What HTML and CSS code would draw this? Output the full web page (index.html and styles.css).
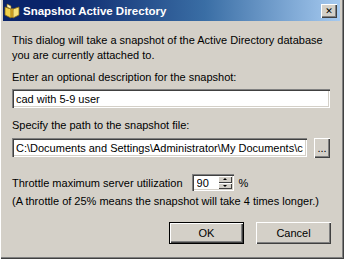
FILE: index.html
```html
<!DOCTYPE html>
<html lang="en">
<head>
  <meta charset="UTF-8" />
  <title>Snapshot Active Directory</title>
  <link rel="stylesheet" href="styles.css">
</head>
<body>
  <div class="window">
    <div class="titlebar">
      <svg class="app-icon" width="16" height="16" viewBox="0 0 16 16">
        <path d="M1 4 L7 6 L7 15 L1 12 Z" fill="#f2d24a" stroke="#8a6a10" stroke-width="0.8"/>
        <path d="M15 4 L9 6 L9 15 L15 12 Z" fill="#f7e27a" stroke="#8a6a10" stroke-width="0.8"/>
        <path d="M7 6 L8 5 L9 6 L9 15 L8 14 L7 15 Z" fill="#c89a20"/>
        <path d="M3 1 L7 3 L7 6 L3 4 Z" fill="#fff6c0" stroke="#8a6a10" stroke-width="0.6"/>
      </svg>
      <span class="title">Snapshot Active Directory</span>
      <button class="close">&#x2715;</button>
    </div>

    <div class="content">
      <p class="intro">This dialog will take a snapshot of the Active Directory database<br>you are currently attached to.</p>

      <label class="field-label" for="desc">Enter an optional description for the snapshot:</label>
      <input class="textbox" id="desc" type="text" value="cad with 5-9 user">

      <label class="field-label spaced" for="path">Specify the path to the snapshot file:</label>
      <div class="path-row">
        <input class="textbox path" id="path" type="text" value="C:\Documents and Settings\Administrator\My Documents\cad with 5-9 user.snp">
        <button class="btn browse">...</button>
      </div>

      <div class="throttle-row">
        <span>Throttle maximum server utilization</span>
        <div class="spin">
          <input class="spin-value" type="text" value="90">
          <div class="spin-arrows">
            <button class="arrow up"></button>
            <button class="arrow down"></button>
          </div>
        </div>
        <span>%</span>
      </div>
      <p class="note">(A throttle of 25% means the snapshot will take 4 times longer.)</p>

      <div class="actions">
        <button class="btn default">OK</button>
        <button class="btn">Cancel</button>
      </div>
    </div>
  </div>
</body>
</html>
```

FILE: styles.css
```css
:root {
  --face: #d4d0c8;
  --shadow: #808080;
  --dark: #404040;
  --text: #000;
}
body {
  margin: 0;
  background-color: var(--face);
  font-family: 'Liberation Sans', Arial, sans-serif;
  font-size: 11px;
  color: var(--text);
}
.window {
  width: 344px;
  height: 259px;
  box-sizing: border-box;
  padding: 0 4px 4px 3px;
  background-color: var(--face);
  box-shadow: inset 2px 0 0 -1px #fff, inset -1px -1px 0 var(--dark), inset -2px -2px 0 var(--shadow);
}
.titlebar {
  height: 21px;
  display: flex;
  align-items: center;
  padding: 0 2px 0 1px;
  background: linear-gradient(to right, #0a246a 0%, #0a246a 15%, #3a6ea5 60%, #a6caf0 100%);
}
.app-icon {
  flex: none;
  margin-right: 3px;
}
.title {
  flex: 1;
  color: #fff;
  font-weight: bold;
  font-size: 11.5px;
}
.close {
  width: 16px;
  height: 14px;
  padding: 0;
  margin-right: 1px;
  font-size: 9px;
  font-weight: bold;
  line-height: 12px;
  font-family: 'DejaVu Sans', sans-serif;
  color: #000;
  background-color: var(--face);
  border: none;
  box-shadow: inset 1px 1px 0 #fff, inset -1px -1px 0 var(--dark), inset -2px -2px 0 var(--shadow);
}
.content {
  padding: 12px 9px 0 9px;
}
p {
  margin: 0;
  line-height: 15px;
}
.field-label {
  display: block;
  line-height: 15px;
  margin-top: 7px;
  margin-bottom: 4px;
}
.field-label.spaced {
  margin-top: 10px;
  margin-bottom: 5px;
}
.textbox {
  display: block;
  box-sizing: border-box;
  width: 318px;
  height: 19px;
  margin: 0;
  padding: 0 4px;
  font: inherit;
  color: var(--text);
  background-color: #fff;
  border: none;
  box-shadow: inset 1px 1px 0 var(--shadow), inset 2px 2px 0 var(--dark), inset -1px -1px 0 #fff, inset -2px -2px 0 var(--face);
  outline: none;
}
.path-row {
  display: flex;
  align-items: flex-start;
  gap: 7px;
}
.textbox.path {
  width: 295px;
}
.btn {
  box-sizing: border-box;
  padding: 0;
  font: inherit;
  color: var(--text);
  background-color: var(--face);
  border: none;
  box-shadow: inset 1px 1px 0 #fff, inset -1px -1px 0 var(--dark), inset -2px -2px 0 var(--shadow);
}
.browse {
  width: 16px;
  height: 20px;
  line-height: 14px;
}
.throttle-row {
  display: flex;
  align-items: center;
  margin-top: 16px;
  height: 17px;
}
.spin {
  display: flex;
  width: 42px;
  height: 17px;
  margin: 0 5px 0 9px;
  box-sizing: border-box;
  background-color: #fff;
  box-shadow: inset 1px 1px 0 var(--shadow), inset 2px 2px 0 var(--dark), inset -1px -1px 0 #fff, inset -2px -2px 0 var(--face);
}
.spin-value {
  width: 26px;
  box-sizing: border-box;
  padding: 0 0 0 5px;
  border: none;
  background: transparent;
  font: inherit;
  outline: none;
}
.spin-arrows {
  display: flex;
  flex-direction: column;
  padding: 2px 2px 2px 0;
  width: 14px;
}
.arrow {
  flex: 1;
  padding: 0;
  border: none;
  background-color: var(--face);
  box-shadow: inset 1px 1px 0 #fff, inset -1px -1px 0 var(--dark);
  position: relative;
}
.arrow::after {
  content: "";
  position: absolute;
  left: 5px;
  top: 2px;
  border-left: 2px solid transparent;
  border-right: 2px solid transparent;
}
.arrow.up::after {
  border-bottom: 2px solid #000;
}
.arrow.down::after {
  border-top: 2px solid #000;
}
.note {
  margin-top: 3px;
}
.actions {
  display: flex;
  justify-content: flex-end;
  gap: 12px;
  margin-top: 13px;
}
.actions .btn {
  width: 75px;
  height: 22px;
}
.btn.default {
  box-shadow: inset 0 0 0 1px #000, inset 2px 2px 0 #fff, inset -2px -2px 0 var(--dark), inset -3px -3px 0 var(--shadow);
}
```
